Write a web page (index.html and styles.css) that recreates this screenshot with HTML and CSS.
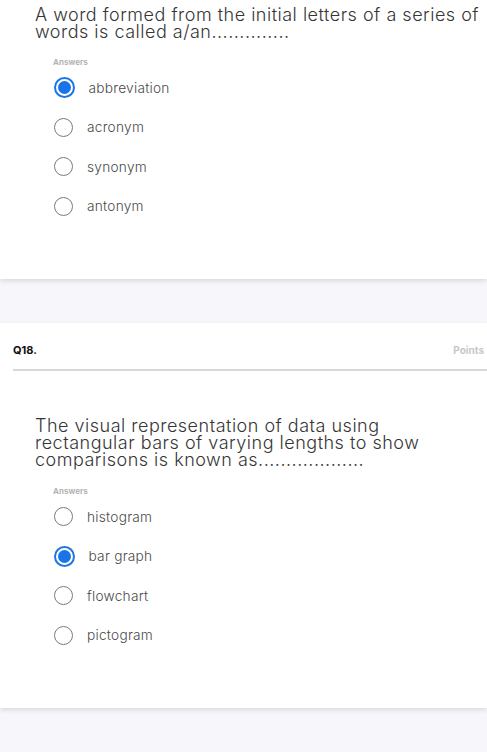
FILE: index.html
```html
<!DOCTYPE html>
<html>
<head>
<meta charset="utf-8">
<link rel="stylesheet" href="styles.css">
</head>
<body>
<section class="card first">
  <div class="question">A word formed from the initial letters of a series of words is called a/an..............</div>
  <div class="answers">
    <div class="answers-label">Answers</div>
    <div class="option"><span class="radio checked"></span><span class="label">abbreviation</span></div>
    <div class="option"><span class="radio"></span><span class="label">acronym</span></div>
    <div class="option"><span class="radio"></span><span class="label">synonym</span></div>
    <div class="option"><span class="radio"></span><span class="label">antonym</span></div>
  </div>
</section>
<div class="gap"></div>
<section class="card second">
  <div class="qhead"><span class="qnum">Q18.</span><span class="points">Points</span></div>
  <div class="question q2">The visual representation of data using rectangular bars of varying lengths to show comparisons is known as...................</div>
  <div class="answers">
    <div class="answers-label">Answers</div>
    <div class="option"><span class="radio"></span><span class="label">histogram</span></div>
    <div class="option"><span class="radio checked"></span><span class="label">bar graph</span></div>
    <div class="option"><span class="radio"></span><span class="label">flowchart</span></div>
    <div class="option"><span class="radio"></span><span class="label">pictogram</span></div>
  </div>
</section>
<div class="gap"></div>
</body>
</html>
```
FILE: styles.css
```css
html, body {
  margin: 0;
  padding: 0;
  background: #ffffff;
  font-family: "Inter", "DejaVu Sans", sans-serif;
}
.card {
  background: #fff;
  position: relative;
  z-index: 1;
  box-shadow: 0 2px 5px rgba(0,0,0,0.12);
}
.card.first {
  padding-top: 6px;
  height: 273px;
}
.card.second {
  height: 385px;
}
.gap {
  height: 44px;
  background: #f7f7fb;
}
.question {
  padding: 0 4px 0 35px;
  font-size: 18px;
  font-weight: 300;
  line-height: 17px;
  color: #363636;
  letter-spacing: 0.5px;
}
.answers {
  padding-left: 53px;
  margin-top: 17px;
}
.answers-label {
  font-size: 8px;
  font-weight: 700;
  color: #b4b4b4;
  line-height: 10px;
  margin-bottom: 1px;
}
.option {
  display: flex;
  align-items: center;
  height: 39.5px;
}
.radio {
  width: 17px;
  height: 17px;
  border: 1.7px solid #7a7a7a;
  border-radius: 50%;
  margin-left: 1px;
  box-sizing: content-box;
  flex: none;
  position: relative;
}
.radio.checked {
  border: 2px solid #1b74e8;
  margin-left: 0.5px;
}
.radio.checked::after {
  content: "";
  position: absolute;
  left: 2px;
  top: 2px;
  width: 13px;
  height: 13px;
  border-radius: 50%;
  background: #1a73e8;
}
.label {
  margin-left: 14px;
  font-size: 13.7px;
  font-weight: 300;
  color: #4a4a4a;
  letter-spacing: 0.25px;
}
.qhead {
  display: flex;
  justify-content: space-between;
  align-items: center;
  margin-left: 13px;
  padding: 20px 3px 12px 0;
  border-bottom: 2px solid #d8d8d8;
}
.qnum {
  font-size: 11px;
  font-weight: 700;
  color: #111;
}
.points {
  font-size: 10px;
  font-weight: 700;
  color: #c8c8c8;
}
.q2 {
  margin-top: 46px;
  max-width: 400px;
}
.q2 + .answers {
  margin-top: 18px;
}
```
